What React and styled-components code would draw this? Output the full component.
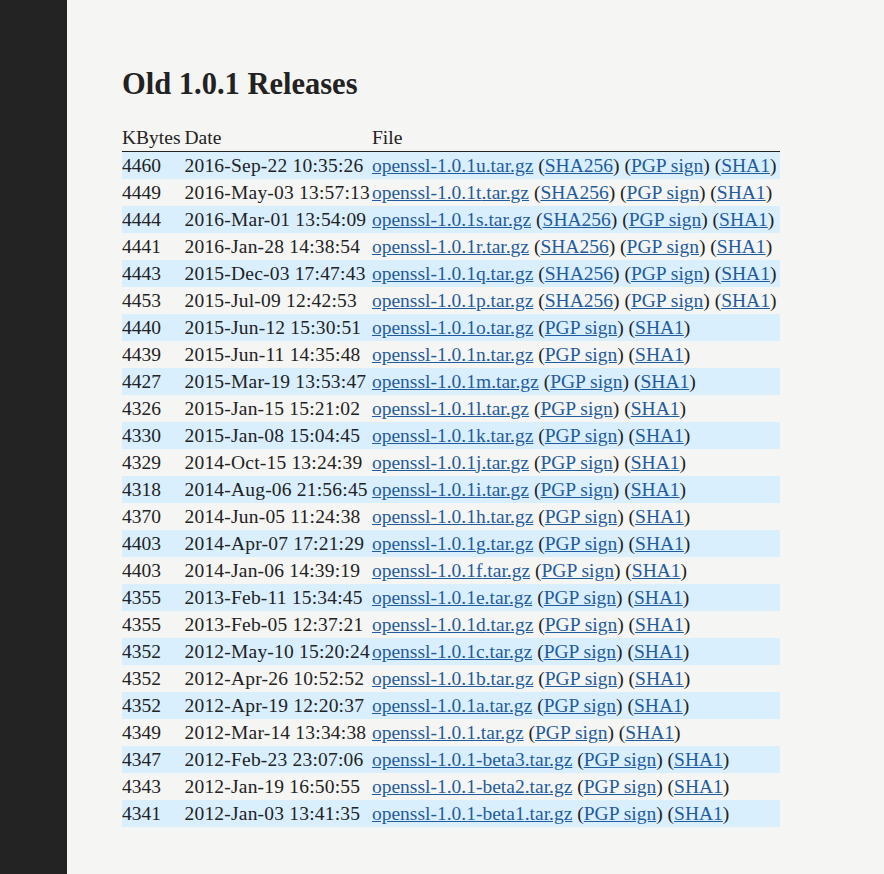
import React from "react";
import styled, { createGlobalStyle } from "styled-components";

const GlobalStyle = createGlobalStyle`
  html, body {
    margin: 0;
    padding: 0;
    background: #f5f5f3;
  }
  body {
    font-family: "Liberation Serif", "Times New Roman", serif;
    color: #222;
  }
`;

const Page = styled.div`
  display: flex;
  min-height: 874px;
`;

const Sidebar = styled.div`
  width: 67px;
  flex-shrink: 0;
  background: #232323;
`;

const Main = styled.main`
  flex: 1;
  padding: 64px 0 40px 55px;
`;

const Heading = styled.h2`
  margin: 0 0 20px;
  font-size: 30.5px;
  line-height: 40px;
  font-weight: bold;
  color: #222;
`;

const Table = styled.table`
  border-collapse: collapse;
  font-size: 19.5px;
  line-height: 27px;
`;

const HeadCell = styled.th`
  text-align: left;
  font-weight: normal;
  padding: 0 4px 0 0;
  border-bottom: 1px solid #222;
`;

const Row = styled.tr`
  background: ${({ $striped }) => ($striped ? "#d9effe" : "transparent")};
`;

const Cell = styled.td`
  padding: 0 ${({ $wide }) => ($wide ? "2px" : "4px")} 0 0;
  white-space: nowrap;
  letter-spacing: ${({ $wide }) => ($wide ? "0.2px" : "normal")};
`;

const Link = styled.a`
  color: #1f5c9e;
  text-decoration: underline;
`;

const releases = [
  ["4460", "2016-Sep-22 10:35:26", "u", true],
  ["4449", "2016-May-03 13:57:13", "t", true],
  ["4444", "2016-Mar-01 13:54:09", "s", true],
  ["4441", "2016-Jan-28 14:38:54", "r", true],
  ["4443", "2015-Dec-03 17:47:43", "q", true],
  ["4453", "2015-Jul-09 12:42:53", "p", true],
  ["4440", "2015-Jun-12 15:30:51", "o"],
  ["4439", "2015-Jun-11 14:35:48", "n"],
  ["4427", "2015-Mar-19 13:53:47", "m"],
  ["4326", "2015-Jan-15 15:21:02", "l"],
  ["4330", "2015-Jan-08 15:04:45", "k"],
  ["4329", "2014-Oct-15 13:24:39", "j"],
  ["4318", "2014-Aug-06 21:56:45", "i"],
  ["4370", "2014-Jun-05 11:24:38", "h"],
  ["4403", "2014-Apr-07 17:21:29", "g"],
  ["4403", "2014-Jan-06 14:39:19", "f"],
  ["4355", "2013-Feb-11 15:34:45", "e"],
  ["4355", "2013-Feb-05 12:37:21", "d"],
  ["4352", "2012-May-10 15:20:24", "c"],
  ["4352", "2012-Apr-26 10:52:52", "b"],
  ["4352", "2012-Apr-19 12:20:37", "a"],
  ["4349", "2012-Mar-14 13:34:38", ""],
  ["4347", "2012-Feb-23 23:07:06", "-beta3"],
  ["4343", "2012-Jan-19 16:50:55", "-beta2"],
  ["4341", "2012-Jan-03 13:41:35", "-beta1"],
];

export default function App() {
  return (
    <Page>
      <GlobalStyle />
      <Sidebar />
      <Main>
        <Heading>Old 1.0.1 Releases</Heading>
        <Table>
          <thead>
            <tr>
              <HeadCell>KBytes</HeadCell>
              <HeadCell>Date</HeadCell>
              <HeadCell>File</HeadCell>
            </tr>
          </thead>
          <tbody>
            {releases.map(([size, date, suffix, sha256], i) => (
              <Row key={date} $striped={i % 2 === 0}>
                <Cell>{size}</Cell>
                <Cell $wide>{date}</Cell>
                <Cell>
                  <Link href="#">openssl-1.0.1{suffix}.tar.gz</Link>{" "}
                  {sha256 && (
                    <>
                      (<Link href="#">SHA256</Link>){" "}
                    </>
                  )}
                  (<Link href="#">PGP sign</Link>) (<Link href="#">SHA1</Link>)
                </Cell>
              </Row>
            ))}
          </tbody>
        </Table>
      </Main>
    </Page>
  );
}
